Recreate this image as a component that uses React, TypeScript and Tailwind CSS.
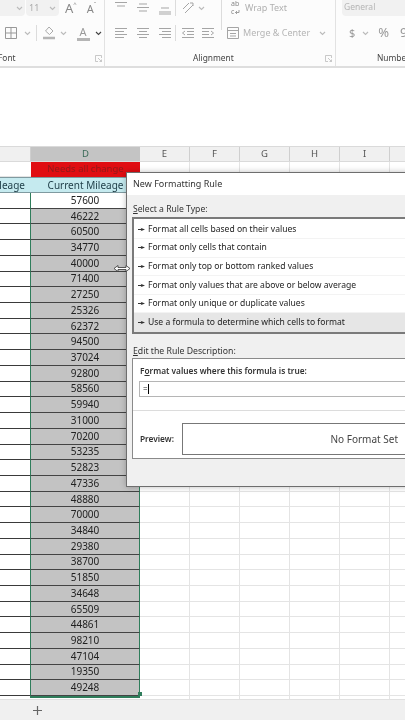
import React from "react";

const vals = [57600,46222,60500,34770,40000,71400,27250,25326,62372,94500,37024,92800,58560,59940,31000,70200,53235,52823,47336,48880,70000,34840,29380,38700,51850,34648,65509,44861,98210,47104,19350,49248];
const rules = ["Format all cells based on their values","Format only cells that contain","Format only top or bottom ranked values","Format only values that are above or below average","Format only unique or duplicate values","Use a formula to determine which cells to format"];
const cols = ["E","F","G","H","I",""];

function Chevron({ dark = false }: { dark?: boolean }) {
  return <svg width="7" height="5" viewBox="0 0 7 5" fill="none" stroke={dark ? "#444" : "#bbb"} strokeWidth="1.1" className="shrink-0"><path d="M1 1l2.5 2.5L6 1" /></svg>;
}
function Lines({ d }: { d: string }) {
  return <svg width="14" height="14" viewBox="0 0 14 14" fill="none" stroke="#a5a5a5" strokeWidth="1" className="shrink-0"><path d={d} /></svg>;
}
function Launcher() {
  return <svg width="7" height="7" viewBox="0 0 7 7" fill="none" stroke="#bbb" strokeWidth="0.8" className="shrink-0"><path d="M6.5 3V.5H.5v6H3M3 3l3.5 3.5M6.5 4.5v2h-2" /></svg>;
}
function Sep({ cls }: { cls: string }) {
  return <div className={"w-px bg-[#dcdcdc] shrink-0 " + cls} />;
}
function Footer({ label, launcher = true, cls }: { label: string; launcher?: boolean; cls: string }) {
  return (
    <div className={"flex items-center h-[13px] mt-[9px] " + cls}>
      <span className="text-[8.400px] text-[#444] flex-1 leading-none">{label}</span>
      {launcher && <Launcher />}
    </div>
  );
}

function Ribbon() {
  return (
    <div className="h-[68px] bg-[#fcfcfc] border-b-2 border-[#dedede] flex overflow-hidden text-[#aaa]" >
      {/* Font */}
      <div className="w-[105px] shrink-0 flex flex-col border-r border-[#e2e2e2]">
        <div className="h-[16px] flex items-center">
          <div className="w-[25px] h-[16px] bg-[#f1f1f1] flex items-center justify-end pr-[2px] rounded-br"><Chevron /></div>
          <div className="w-[33px] h-[16px] ml-[1px] bg-[#f1f1f1] rounded-b flex items-center justify-between px-[3px] text-[9px]"><span>11</span><Chevron /></div>
          <span className="ml-[6px] text-[13px] leading-none text-[#888]">A</span><span className="text-[6px] text-[#888] mb-2">^</span>
          <span className="ml-[10px] text-[11px] leading-none text-[#888]">A</span><span className="text-[6px] text-[#888] mb-2">ˇ</span>
        </div>
        <div className="h-[20px] mt-[7px] flex items-center">
          <svg width="14" height="14" viewBox="0 0 14 14" fill="none" stroke="#999" className="ml-[4px] shrink-0"><path d="M1.5 1.5h11v11h-11zM7 1.5v11M1.5 7h11" /></svg>
          <span className="ml-[6px]"><Chevron /></span>
          <Sep cls="h-[16px] ml-[5px]" />
          <svg width="14" height="14" viewBox="0 0 14 14" fill="none" className="ml-[5px] shrink-0"><path d="M7 1l4 4-3.5 3.5L3.500 5z" stroke="#aaa" /><path d="M1 12h12" stroke="#b5b5b5" strokeWidth="2.500" /></svg>
          <span className="ml-[4px]"><Chevron /></span>
          <span className="ml-[9px] w-[14px] h-[15px] flex flex-col items-center shrink-0">
            <span className="text-[11px] leading-[11px] text-[#999]">A</span>
            <span className="w-[13px] h-[3px] bg-[#b5b5b5] mt-[1px]" />
          </span>
          <span className="ml-[5px]"><Chevron dark /></span>
        </div>
        <Footer label="Font" cls="pr-[2px] ml-[-2px]" />
      </div>
      {/* Alignment */}
      <div className="w-[231px] shrink-0 flex flex-col border-r border-[#e2e2e2] pl-[9px]">
        <div className="h-[16px] flex items-center">
          <Lines d="M1 1.500h12M3 5h8" />
          <span className="ml-[8px]"><Lines d="M3 3h8M1 6.500h12M3 10h8" /></span>
          <span className="ml-[8px]"><Lines d="M3 7h8M1 11h12M1 13h12" /></span>
          <Sep cls="h-[16px] ml-[3px]" />
          <span className="ml-[5px]"><Lines d="M2 8l6-6M4 12l8-8M9 2l3 0 0 3" /></span>
          <span className="ml-[3px]"><Chevron /></span>
          <Sep cls="h-[32px] ml-[16px] mt-[12px]" />
          <span className="ml-[9px] text-[7px] leading-[8px] w-[13px] text-[#888] flex flex-col shrink-0">
            <span>ab</span>
            <span className="flex items-center">c<svg width="6" height="6" viewBox="0 0 6 6" fill="none" stroke="#888" strokeWidth="0.8"><path d="M5 1v2.500H1.500M3 2L1.500 3.500 3 5" /></svg></span>
          </span>
          <span className="ml-[1px] text-[9px] text-[#b0b0b0]">Wrap Text</span>
        </div>
        <div className="h-[20px] mt-[7px] flex items-center">
          <Lines d="M1 2.500h12M1 5.500h9M1 8.500h12M1 11.500h9" />
          <span className="ml-[8px]"><Lines d="M1 2.500h12M3 5.500h8M1 8.500h12M3 11.500h8" /></span>
          <span className="ml-[8px]"><Lines d="M1 2.500h12M4 5.500h9M1 8.500h12M4 11.500h9" /></span>
          <Sep cls="h-[16px] ml-[3px]" />
          <span className="ml-[5px]"><Lines d="M1 2.500h12M6 5.500h7M6 8.500h7M1 11.500h12M4 5L1.500 7 4 9" /></span>
          <span className="ml-[6px]"><Lines d="M1 2.500h12M1 5.500h7M1 8.500h7M1 11.500h12M10 5l2.500 2L10 9" /></span>
          <span className="w-[10px] shrink-0" />
          <span className="ml-[1px]"><Lines d="M1.500 1.500h11v11h-11zM1.500 4.500h11M4 7.500h6M4 10h6" /></span>
          <span className="ml-[3px] text-[9px] text-[#b5b5b5] whitespace-nowrap">Merge &amp; Center</span>
          <span className="ml-[9px]"><Chevron /></span>
        </div>
        <Footer label="Alignment" cls="pl-[79px] pr-[3px]" />
      </div>
      {/* Number */}
      <div className="flex-1 flex flex-col pl-[6px] overflow-hidden">
        <div className="h-[16px] bg-[#f1f1f1] rounded-bl text-[8.500px] text-[#b5b5b5] pl-[2px] leading-[14px]">General</div>
        <div className="h-[20px] mt-[7px] flex items-center text-[#999] whitespace-nowrap">
          <span className="ml-[7px] text-[11px]">$</span>
          <span className="ml-[7px]"><Chevron /></span>
          <span className="ml-[9px] text-[13px]">%</span>
          <span className="ml-[11px] text-[13px]">9</span>
        </div>
        <Footer label="Number" launcher={false} cls="pl-[35px] whitespace-nowrap" />
      </div>
    </div>
  );
}

function EmptyCells() {
  return (
    <>
      {cols.map((c, i) => (
        <div key={i} className="w-[50px] shrink-0 border-r border-b border-[#e4e4e4]" />
      ))}
    </>
  );
}

function Grid() {
  return (
    <div className="flex flex-col">
      {/* column headers */}
      <div className="h-[16px] flex bg-[#f0f0f0] border-y border-[#dadada] text-[9.500px] text-[#555]">
        <div className="w-[31px] shrink-0 border-r border-[#cfcfcf]" />
        <div className="w-[109px] shrink-0 bg-[#c4c4c4] flex items-center justify-center text-[#3a6b58]">D</div>
        {cols.map((c, i) => (
          <div key={i} className="w-[50px] shrink-0 flex items-center justify-center border-r border-[#cfcfcf]">{c}</div>
        ))}
      </div>
      {/* row 1 */}
      <div className="h-[15px] flex">
        <div className="w-[31px] shrink-0 border-b border-[#e4e4e4]" />
        <div className="w-[109px] shrink-0 bg-[#e00d12] flex items-center justify-center text-[9.500px] text-[#8f1a1a] whitespace-nowrap">Needs all change</div>
        <EmptyCells />
      </div>
      {/* row 2 */}
      <div className="h-[16px] flex text-[10px] text-[#1d3c46]">
        <div className="w-[31px] shrink-0 bg-[#c5eaef] border-y border-[#7f9aa0] flex items-center justify-end pr-[6px] overflow-hidden whitespace-nowrap">Mileage</div>
        <div className="w-[109px] shrink-0 bg-[#c5eaef] border-y border-[#7f9aa0] flex items-center justify-center whitespace-nowrap">Current Mileage</div>
        <EmptyCells />
      </div>
      {/* data rows */}
      <div className="flex flex-col">
        {vals.map((v, i) => (
          <div key={v} className="h-[15.720px] flex text-[10px] text-[#222]">
            <div className="w-[30px] shrink-0 border-b border-[#3a3a3a] bg-white" />
            <div className={"w-[110px] shrink-0 flex items-center justify-center border-x border-[#2f7d5b] " + (i === 0 ? "bg-white border-b border-b-[#444]" : "bg-[#c3c3c3] border-b border-b-[#444]")}>{v}</div>
            <EmptyCells />
          </div>
        ))}
      </div>
      <div className="h-[3px] flex">
        <div className="w-[30px] shrink-0" />
        <div className="w-[110px] shrink-0 h-[2px] bg-[#2f7d5b]" />
        <div className="flex">{cols.map((c, i) => <div key={i} className="w-[50px] shrink-0 border-r border-[#e4e4e4]" />)}</div>
      </div>
    </div>
  );
}

function Dialog() {
  return (
    <div className="absolute left-[126px] top-[172px] w-[300px] h-[315px] bg-[#f0f0f0] border border-[#6e6e6e] shadow-[0_0_6px_rgba(0,0,0,0.25)] text-[#222] overflow-hidden flex flex-col">
      <div className="h-[22px] bg-white shrink-0 pl-[6px] text-[9px] flex items-center text-[#333]">New Formatting Rule</div>
      <div className="pl-[6px] mt-[8px] text-[8.600px] leading-[12px] text-[#333] h-[14px]"><span className="underline">S</span>elect a Rule Type:</div>
      <div className="ml-[5px] mr-[-2px] h-[117px] bg-white border-2 border-[#7a7a7a] flex flex-col pt-[1.500px] shrink-0">
        {rules.map((r, i) => (
          <div key={r} className={"h-[18.600px] flex items-center pl-[4px] text-[8.570px] text-[#1c1c1c] whitespace-nowrap " + (i === 5 ? "bg-[#e6e6e6]" : "border-b border-[#f3f3f3]")}>
            <svg width="7" height="5" viewBox="0 0 7 5" fill="#333" className="shrink-0 mr-[3px]"><path d="M0 2h3.500L2.500.8 7 2.500 2.500 4.200 3.500 3H0z" /></svg>
            {r}
          </div>
        ))}
      </div>
      <div className="pl-[6px] mt-[11px] text-[8.700px] leading-[12px] text-[#333] h-[13px]"><span className="underline">E</span>dit the Rule Description:</div>
      <div className="ml-[5px] mr-[-2px] h-[101px] bg-white border border-[#8a8a8a] shrink-0 flex flex-col">
        <div className="pl-[7px] pt-[6px] h-[22px] text-[8.300px] font-semibold leading-[12px] text-[#333]">F<span className="underline">o</span>rmat values where this formula is true:</div>
        <div className="ml-[6px] h-[16px] border border-[#b5b5b5] border-r-0 flex items-center pl-[3px] text-[8px] shrink-0">=<span className="w-px h-[10px] bg-black" /></div>
        <div className="mt-[13px] border-t border-[#dcdcdc] flex items-start h-[48px] shrink-0 pt-[12px]">
          <span className="pl-[7px] w-[49px] h-[32px] flex items-center text-[8.300px] font-semibold text-[#333]">Preview:</span>
          <div className="flex-1 h-[32px] border border-[#777] border-r-0 flex items-center justify-end pr-[28px] text-[10px] text-[#444]">No Format Set</div>
        </div>
      </div>
    </div>
  );
}

export default function App() {
  return (
    <div className="relative w-[405px] h-[720px] overflow-hidden bg-white flex flex-col [font-family:'Noto_Sans','Liberation_Sans',sans-serif] blur-[0.25px]">
      <Ribbon />
      <div className="h-[78px] shrink-0 bg-white" />
      <Grid />
      <div className="flex-1 bg-[#f0f0f0] flex items-center pl-[32px] border-t border-[#e0e0e0]">
        <svg width="11" height="11" viewBox="0 0 11 11" stroke="#666" strokeWidth="1.200"><path d="M5.500 1v9M1 5.500h9" /></svg>
      </div>
      <Dialog />
      {/* resize cursor */}
      <svg width="18" height="9" viewBox="0 0 18 9" className="absolute left-[113px] top-[264px]" fill="white" stroke="#333" strokeWidth="0.8"><path d="M1 4.500L5 1.500V3.500h8V1.500l4 3-4 3V5.500H5v2z" /></svg>
      {/* fill handle */}
      <div className="absolute left-[138px] top-[692px] w-[4px] h-[4px] bg-[#2f7d5b]" />
    </div>
  );
}
